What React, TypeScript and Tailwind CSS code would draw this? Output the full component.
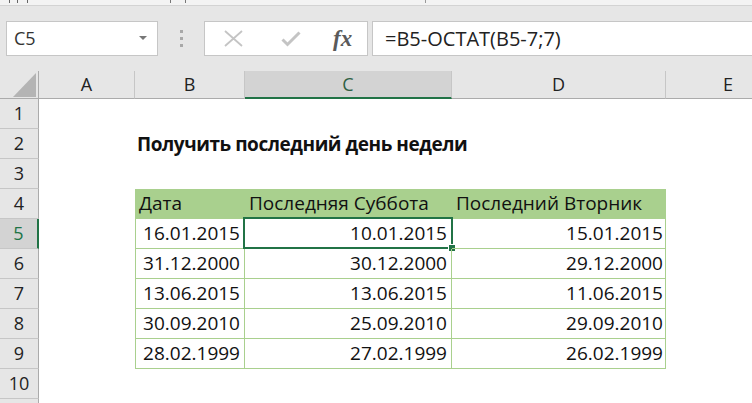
import React from 'react';

const COLS = [
  { key: 'A', w: 96 },
  { key: 'B', w: 110 },
  { key: 'C', w: 207 },
  { key: 'D', w: 214 },
  { key: 'E', w: 125 },
];

const DATA = [
  ['16.01.2015', '10.01.2015', '15.01.2015'],
  ['31.12.2000', '30.12.2000', '29.12.2000'],
  ['13.06.2015', '13.06.2015', '11.06.2015'],
  ['30.09.2010', '25.09.2010', '29.09.2010'],
  ['28.02.1999', '27.02.1999', '26.02.1999'],
];

const font = { fontFamily: '"Open Sans", "DejaVu Sans", sans-serif' };

const Toolbar: React.FC = () => (
  <div className="bg-[#e6e6e6] h-[71px] flex flex-col">
    <div className="h-[6px] bg-[#f3f3f3] border-b border-[#d3d3d3] relative">
      <span className="absolute left-[9px] top-0 h-[3px] w-px bg-[#666]" />
      <span className="absolute left-[17px] top-0 h-[3px] w-px bg-[#666]" />
      <span className="absolute left-[27px] top-0 h-[3px] w-px bg-[#666]" />
      <span className="absolute left-[170px] top-0 h-[3px] w-px bg-[#777]" />
      <span className="absolute left-[185px] top-0 h-[3px] w-px bg-[#777]" />
      <span className="absolute left-[425px] top-0 h-[3px] w-px bg-[#999]" />
    </div>
    <div className="flex items-center h-[35px] mt-[15px]">
      <div className="ml-[6px] w-[152px] h-[35px] bg-white border border-[#c6c6c6] flex items-center justify-between pl-[7px] pr-[10px]">
        <span className="text-[18px] text-[#333]">C5</span>
        <svg width="8" height="5" viewBox="0 0 8 5"><path d="M0 0h8L4 4z" fill="#777" /></svg>
      </div>
      <div className="w-[46px] flex flex-col items-center gap-[4px]">
        <span className="w-[3px] h-[3px] bg-[#a8a8a8]" />
        <span className="w-[3px] h-[3px] bg-[#a8a8a8]" />
        <span className="w-[3px] h-[3px] bg-[#a8a8a8]" />
      </div>
      <div className="w-[164px] h-[35px] bg-white border border-[#c6c6c6] flex items-center pl-[19px]">
        <svg width="19" height="17" viewBox="0 0 19 17">
          <path d="M1 1l17 15M18 1L1 16" stroke="#c4c4c4" strokeWidth="1.8" fill="none" />
        </svg>
        <svg width="20" height="16" viewBox="0 0 20 16" className="ml-[38px]">
          <path d="M1.5 8.5l5 5L18.5 1.5" stroke="#c4c4c4" strokeWidth="3" fill="none" />
        </svg>
        <span
          className="ml-[32px] text-[23px] italic font-bold text-[#5a5a5a] leading-none"
          style={{ fontFamily: '"Liberation Serif", "DejaVu Serif", serif' }}
        >
          fx
        </span>
      </div>
      <div className="ml-[4px] flex-1 h-[35px] bg-white border-y border-l border-[#c6c6c6] flex items-center pl-[12px]">
        <span className="text-[20px] text-[#222]">=B5-ОСТАТ(B5-7;7)</span>
      </div>
    </div>
  </div>
);

const ColumnHeaders: React.FC = () => (
  <div className="flex h-[28px] bg-[#e6e6e6]">
    <div className="w-[39px] shrink-0 relative border-r border-b border-[#ababab]">
      <svg className="absolute left-[13px] top-[2px]" width="23" height="24" viewBox="0 0 23 24">
        <path d="M23 0V24H0z" fill="#b4b4b4" />
      </svg>
    </div>
    {COLS.map((c) => {
      const sel = c.key === 'C';
      return (
        <div
          key={c.key}
          style={{ width: c.w }}
          className={
            sel
              ? 'shrink-0 flex items-center justify-center text-[18px] bg-[#d3d3d3] text-[#2f5f44] border-r border-[#c6c6c6] border-b-2 border-b-[#217346]'
              : 'shrink-0 flex items-center justify-center text-[18px] text-[#222] border-r border-[#c6c6c6] border-b border-b-[#ababab]'
          }
        >
          {c.key}
        </div>
      );
    })}
  </div>
);

const RowHeader: React.FC<{ n: number; sel?: boolean }> = ({ n, sel }) => (
  <div
    className={
      sel
        ? 'w-[39px] shrink-0 h-full flex items-center justify-center text-[18px] bg-[#d3d3d3] text-[#217346] border-b border-[#c6c6c6] border-r-2 border-r-[#217346]'
        : 'w-[39px] shrink-0 h-full flex items-center justify-center text-[18px] bg-[#e6e6e6] text-[#222] border-b border-[#c6c6c6] border-r border-r-[#ababab]'
    }
  >
    {n <= 10 ? n : ''}
  </div>
);

const Cell: React.FC<{
  w: number;
  className?: string;
  children?: React.ReactNode;
}> = ({ w, className = '', children }) => (
  <div style={{ width: w }} className={'shrink-0 h-full flex items-center relative ' + className}>
    {children}
  </div>
);

export default function App() {
  const rows = Array.from({ length: 11 }, (_, i) => i + 1);
  return (
    <div className="w-[752px] h-[403px] overflow-hidden bg-white text-[#111]" style={font}>
      <Toolbar />
      <ColumnHeaders />
      <div className="flex flex-col">
        {rows.map((r) => {
          const isTable = r >= 4 && r <= 9;
          const hdr = r === 4;
          const d = r >= 5 && r <= 9 ? DATA[r - 5] : null;
          const tb = isTable ? 'border-b border-[#a9d08e] ' + (hdr ? 'bg-[#a9d08e] ' : '') : '';
          return (
            <div key={r} className="flex h-[30px]">
              <RowHeader n={r} sel={r === 5} />
              <Cell w={96} />
              <Cell
                w={110}
                className={isTable ? tb + 'border-l border-r border-[#a9d08e] ' + (d ? 'justify-end pr-[4px]' : 'pl-[3px]') : 'pl-[2px]'}
              >
                {r === 2 && (
                  <span className="text-[19px] font-bold whitespace-nowrap tracking-[-0.45px]">
                    Получить последний день недели
                  </span>
                )}
                {hdr && <span className="text-[19px] whitespace-nowrap">Дата</span>}
                {d && <span className="text-[19px]">{d[0]}</span>}
              </Cell>
              <Cell
                w={207}
                className={isTable ? tb + 'border-r border-[#a9d08e] ' + (d ? 'justify-end pr-[4px]' : 'pl-[4px]') : ''}
              >
                {hdr && <span className="text-[19px] whitespace-nowrap">Последняя Суббота</span>}
                {d && <span className="text-[19px]">{d[1]}</span>}
                {r === 5 && (
                  <div className="absolute left-[-2px] right-[-2px] top-[-2px] bottom-[-1px] border-2 border-[#217346]">
                    <span className="absolute right-[-5px] bottom-[-5px] w-[8px] h-[8px] bg-[#217346] border border-white" />
                  </div>
                )}
              </Cell>
              <Cell
                w={214}
                className={isTable ? tb + 'border-r border-[#a9d08e] ' + (d ? 'justify-end pr-[2px]' : 'pl-[4px]') : ''}
              >
                {hdr && <span className="text-[19px] whitespace-nowrap">Последний Вторник</span>}
                {d && <span className="text-[19px]">{d[2]}</span>}
              </Cell>
              <Cell w={125} />
            </div>
          );
        })}
      </div>
    </div>
  );
}
